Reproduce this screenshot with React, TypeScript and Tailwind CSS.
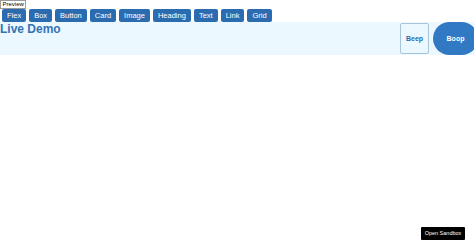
const tabs = ["Flex", "Box", "Button", "Card", "Image", "Heading", "Text", "Link", "Grid"];

export default function App() {
  return (
    <div className="relative h-[248px] w-[474px] overflow-hidden bg-white font-['Liberation_Sans',Arial,sans-serif] leading-none">
      <div className="flex">
        <div className="border border-[#9a9a9a] px-[1.5px] text-[6px] leading-[7px] text-black">Preview</div>
      </div>
      <div className="flex gap-[3px] px-[2px]">
        {tabs.map((t) => (
          <button
            key={t}
            className="h-[13px] rounded-[2px] bg-[#2b6cb0] px-[5px] text-[7.5px] leading-[13px] text-white"
          >
            {t}
          </button>
        ))}
      </div>
      <div className="flex h-[33px] items-stretch justify-between bg-[#ebf8ff]">
        <h1 className="text-[12px] font-bold leading-[14px] text-[#3473b3]">Live Demo</h1>
        <div className="flex items-center gap-[4px]">
          <button className="h-[31px] w-[29px] rounded-[2px] border border-[#a9c4d8] text-[7px] font-bold text-[#2b6cb0]">
            Beep
          </button>
          <button className="mr-[-4px] h-[33px] w-[45px] rounded-full bg-[#3179c2] text-[7px] font-bold text-white">
            Boop
          </button>
        </div>
      </div>
      <button className="absolute left-[421px] top-[227px] h-[13px] w-[44px] rounded-[1px] bg-black text-[5.5px] text-white">
        Open Sandbox
      </button>
    </div>
  );
}
